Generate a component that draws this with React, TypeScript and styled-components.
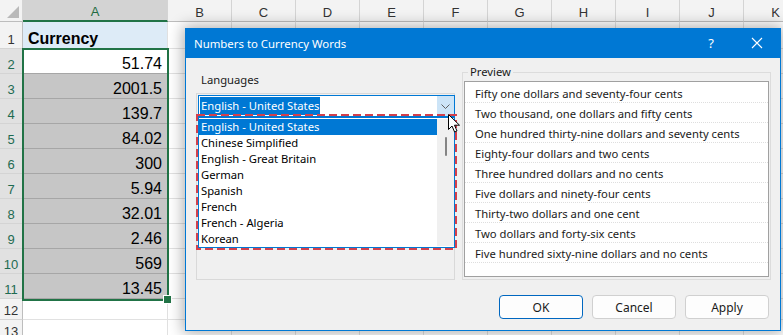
import React from 'react';
import styled, { createGlobalStyle } from 'styled-components';

const GlobalStyle = createGlobalStyle`
  html, body {
    margin: 0;
    padding: 0;
    background: #ffffff;
  }
  * {
    box-sizing: border-box;
  }
`;

const UI_FONT = `"Noto Sans", "Open Sans", sans-serif`;
const SHEET_FONT = `"Liberation Sans", Arial, sans-serif`;

const columns = ['A', 'B', 'C', 'D', 'E', 'F', 'G', 'H', 'I', 'J', 'K'];
const values = ['51.74', '2001.5', '139.7', '84.02', '300', '5.94', '32.01', '2.46', '569', '13.45'];

const languages = [
  'English - United States',
  'Chinese Simplified',
  'English - Great Britain',
  'German',
  'Spanish',
  'French',
  'French - Algeria',
  'Korean',
];

const previews = [
  'Fifty one dollars and seventy-four cents',
  'Two thousand, one dollars and fifty cents',
  'One hundred thirty-nine dollars and seventy cents',
  'Eighty-four dollars and two cents',
  'Three hundred dollars and no cents',
  'Five dollars and ninety-four cents',
  'Thirty-two dollars and one cent',
  'Two dollars and forty-six cents',
  'Five hundred sixty-nine dollars and no cents',
];

const Page = styled.div`
  position: relative;
  width: 783px;
  height: 335px;
  overflow: hidden;
  background: #ffffff;
`;

/* ---------- spreadsheet ---------- */

const Sheet = styled.div`
  display: grid;
  grid-template-columns: 23px 145px repeat(10, 64px);
  grid-template-rows: 22px 27px repeat(10, 25px) 21px 21px;
  font-family: ${SHEET_FONT};
`;

const Corner = styled.div`
  position: relative;
  background: #f3f3f3;
  border-right: 1px solid #d4d4d4;
  border-bottom: 1px solid #bdbdbd;

  &::after {
    content: '';
    position: absolute;
    right: 3px;
    bottom: 3px;
    width: 0;
    height: 0;
    border-left: 12px solid transparent;
    border-bottom: 12px solid #b9b9b9;
  }
`;

const ColHead = styled.div<{ $active?: boolean }>`
  display: flex;
  align-items: center;
  justify-content: center;
  background: ${p => (p.$active ? '#d3d3d3' : '#f3f3f3')};
  color: ${p => (p.$active ? '#1e6b41' : '#333333')};
  border-right: 1px solid #d4d4d4;
  border-bottom: ${p => (p.$active ? '2px solid #217346' : '1px solid #bdbdbd')};
  font-size: 13px;
  padding-top: 3px;
`;

const RowHead = styled.div<{ $active?: boolean }>`
  display: flex;
  align-items: flex-end;
  justify-content: center;
  padding-bottom: 1px;
  background: ${p => (p.$active ? '#e1e1e1' : '#f3f3f3')};
  color: ${p => (p.$active ? '#1e6b51' : '#333333')};
  border-right: 1px solid #bdbdbd;
  border-bottom: 1px solid #d4d4d4;
  font-size: 13px;
`;

const Cell = styled.div<{ $tone?: 'header' | 'active' | 'selected' | 'plain' }>`
  display: flex;
  align-items: flex-end;
  justify-content: ${p => (p.$tone === 'header' ? 'flex-start' : 'flex-end')};
  padding: 0 5px 0 5px;
  font-size: 16px;
  font-weight: ${p => (p.$tone === 'header' ? 700 : 400)};
  color: #000000;
  background: ${p =>
    p.$tone === 'header' ? '#ddebf7' : p.$tone === 'selected' ? '#c6c6c6' : '#ffffff'};
  border-right: 1px solid #e1e1e1;
  border-bottom: 1px solid
    ${p => (p.$tone === 'selected' || p.$tone === 'active' ? '#a6a6a6' : '#e1e1e1')};
`;

const Selection = styled.div`
  position: absolute;
  left: 22px;
  top: 48px;
  width: 147px;
  height: 253px;
  border: 2px solid #217346;
  pointer-events: none;

  &::after {
    content: '';
    position: absolute;
    right: -5px;
    bottom: -5px;
    width: 7px;
    height: 7px;
    background: #217346;
    border: 1px solid #ffffff;
  }
`;

/* ---------- dialog ---------- */

const Dialog = styled.div`
  position: absolute;
  left: 185px;
  top: 28px;
  width: 596px;
  height: 303px;
  display: flex;
  flex-direction: column;
  background: #f0f0f0;
  border: 1px solid #0078d4;
  box-shadow: 0 0 14px 2px rgba(0, 0, 0, 0.32);
  font-family: ${UI_FONT};
  font-size: 11.25px;
  color: #1a1a1a;
`;

const TitleBar = styled.div`
  display: flex;
  align-items: center;
  height: 30px;
  margin-top: -1px;
  background: #0078d4;
  color: #ffffff;
  padding-left: 8px;
`;

const Title = styled.div`
  flex: 1;
  font-size: 11.4px;
`;

const TitleButton = styled.div`
  width: 46px;
  height: 100%;
  display: flex;
  align-items: center;
  justify-content: center;
  font-size: 13px;
  color: #ffffff;
`;

const Body = styled.div`
  flex: 1;
  display: grid;
  grid-template-columns: 259px 309px;
  grid-template-rows: auto auto;
  column-gap: 7px;
  align-content: start;
  padding: 6px 9px 0 10px;
`;

const LeftColumn = styled.div`
  display: flex;
  flex-direction: column;
`;

const FieldLabel = styled.div`
  height: 16px;
  line-height: 16px;
  margin: 8px 0 5px 5px;
`;

const LangPanel = styled.div`
  height: 187px;
  border: 1px solid #d9d9d9;
  padding: 1px 0 0 1px;
`;

const ComboWrap = styled.div`
  position: relative;
  width: 257px;
`;

const Combo = styled.div`
  display: flex;
  align-items: center;
  height: 22px;
  background: #ffffff;
  border: 1px solid #0078d4;
  padding-left: 1px;
`;

const ComboValue = styled.div`
  flex: 1;
  display: flex;
  align-items: center;
  height: 18px;

  span {
    background: #0078d4;
    color: #ffffff;
    padding: 0 1px 0 1px;
    line-height: 18px;
  }
`;

const ComboButton = styled.div`
  width: 17px;
  height: 20px;
  display: flex;
  align-items: center;
  justify-content: center;
  background: #cce4f7;
`;

const DropList = styled.div`
  position: absolute;
  left: 0;
  top: 100%;
  width: 257px;
  height: 131px;
  display: flex;
  background: #ffffff;
  border: 1px solid #0078d4;
  padding: 1px 0 1px 0;
  z-index: 2;
`;

const DropItems = styled.div`
  flex: 1;
`;

const DropItem = styled.div<{ $selected?: boolean }>`
  height: 16px;
  line-height: 16px;
  padding-left: 2px;
  background: ${p => (p.$selected ? '#0078d4' : 'transparent')};
  color: ${p => (p.$selected ? '#ffffff' : '#000000')};
  white-space: nowrap;
`;

const ScrollTrack = styled.div`
  width: 17px;
  background: #f0f0f0;
  display: flex;
  justify-content: center;
  padding-top: 18px;
`;

const ScrollThumb = styled.div`
  width: 2px;
  height: 19px;
  background: #858585;
  border-radius: 1px;
`;

const Annotation = styled.svg`
  position: absolute;
  left: -2px;
  top: 19px;
  width: 261px;
  height: 136px;
  z-index: 3;
  pointer-events: none;
  overflow: visible;
`;

const Cursor = styled.svg`
  position: absolute;
  left: 250px;
  top: 19px;
  width: 13px;
  height: 20px;
  z-index: 4;
  overflow: visible;
`;

const Group = styled.fieldset`
  margin: 0;
  height: 216px;
  border: 1px solid #dcdcdc;
  padding: 1px 1px 1px 1px;
  min-width: 0;

  legend {
    padding: 0 2px;
    margin-left: 4px;
    height: 16px;
    line-height: 16px;
  }
`;

const PreviewList = styled.div`
  height: 196px;
  background: #ffffff;
  border: 1px solid #a0a0a0;
  padding-top: 1px;
`;

const PreviewRow = styled.div`
  height: 20px;
  line-height: 21px;
  padding-left: 10px;
  border-bottom: 1px dotted #dedede;
  white-space: nowrap;
`;

const ButtonRow = styled.div`
  grid-column: 1 / span 2;
  display: flex;
  justify-content: flex-end;
  gap: 9px;
  margin-top: 15px;
  padding-right: 2px;
`;

const Button = styled.div<{ $primary?: boolean }>`
  width: 84px;
  height: 24px;
  display: flex;
  align-items: center;
  justify-content: center;
  background: #fdfdfd;
  border: 1px solid ${p => (p.$primary ? '#0067c0' : '#d0d0d0')};
  border-radius: 4px;
  color: #1a1a1a;
  font-size: 12px;
`;

const App = () => {
  return (
    <Page>
      <GlobalStyle />
      <Sheet>
        <Corner />
        {columns.map(c => (
          <ColHead key={c} $active={c === 'A'}>
            {c}
          </ColHead>
        ))}

        <RowHead>1</RowHead>
        <Cell $tone="header">Currency</Cell>
        {columns.slice(1).map(c => (
          <Cell key={`1${c}`} />
        ))}

        {values.map((v, i) => (
          <React.Fragment key={v}>
            <RowHead $active>{i + 2}</RowHead>
            <Cell $tone={i === 0 ? 'active' : 'selected'}>{v}</Cell>
            {columns.slice(1).map(c => (
              <Cell key={`${i}${c}`} />
            ))}
          </React.Fragment>
        ))}

        {[12, 13].map(r => (
          <React.Fragment key={r}>
            <RowHead>{r}</RowHead>
            {columns.map(c => (
              <Cell key={`${r}${c}`} />
            ))}
          </React.Fragment>
        ))}
      </Sheet>
      <Selection />

      <Dialog>
        <TitleBar>
          <Title>Numbers to Currency Words</Title>
          <TitleButton>?</TitleButton>
          <TitleButton>
            <svg width="12" height="12" viewBox="0 0 12 12">
              <path d="M1 1 L11 11 M11 1 L1 11" stroke="#ffffff" strokeWidth="1.1" />
            </svg>
          </TitleButton>
        </TitleBar>

        <Body>
          <LeftColumn>
            <FieldLabel>Languages</FieldLabel>
            <LangPanel>
              <ComboWrap>
                <Combo>
                  <ComboValue>
                    <span>English - United States</span>
                  </ComboValue>
                  <ComboButton>
                    <svg width="9" height="5" viewBox="0 0 9 5">
                      <path d="M0.5 0.5 L4.5 4.5 L8.5 0.5" fill="none" stroke="#606060" strokeWidth="1" />
                    </svg>
                  </ComboButton>
                </Combo>
                <DropList>
                  <DropItems>
                    {languages.map((l, i) => (
                      <DropItem key={l} $selected={i === 0}>
                        {l}
                      </DropItem>
                    ))}
                  </DropItems>
                  <ScrollTrack>
                    <ScrollThumb />
                  </ScrollTrack>
                </DropList>
                <Annotation viewBox="0 0 261 136">
                  <rect
                    x="1"
                    y="1"
                    width="259"
                    height="134"
                    fill="none"
                    stroke="#d3404c"
                    strokeWidth="2"
                    strokeDasharray="8 4"
                  />
                </Annotation>
                <Cursor viewBox="0 0 13 20">
                  <path
                    d="M0.5 0.5 L0.5 15.5 L4 12 L6.6 18 L9 17 L6.5 11.2 L11.5 11.2 Z"
                    fill="#ffffff"
                    stroke="#000000"
                    strokeWidth="1"
                    strokeLinejoin="round"
                  />
                </Cursor>
              </ComboWrap>
            </LangPanel>
          </LeftColumn>

          <Group>
            <legend>Preview</legend>
            <PreviewList>
              {previews.map(p => (
                <PreviewRow key={p}>{p}</PreviewRow>
              ))}
            </PreviewList>
          </Group>

          <ButtonRow>
            <Button $primary>OK</Button>
            <Button>Cancel</Button>
            <Button>Apply</Button>
          </ButtonRow>
        </Body>
      </Dialog>
    </Page>
  );
};

export default App;
